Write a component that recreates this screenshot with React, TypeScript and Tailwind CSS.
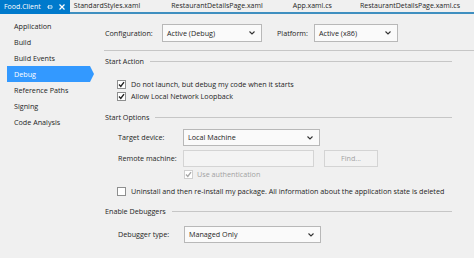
import React from 'react';

const font = { fontFamily: '"Segoe UI", "Open Sans", "Noto Sans", sans-serif' };

const Chevron = () => (
    <svg width="6" height="4" viewBox="0 0 6 4" className="shrink-0">
        <path d="M0.5 0.5 L3 3 L5.5 0.5" fill="none" stroke="#333" strokeWidth="1.1" />
    </svg>
);

const Select = ({ value, className }: { value: string; className: string }) => (
    <div
        className={`flex items-center justify-between h-[17px] border border-[#b8b8b8] bg-[#fafafa] pl-[4px] pr-[6px] text-[#1e1e1e] ${className}`}
    >
        <span>{value}</span>
        <Chevron />
    </div>
);

const Check = ({ checked, disabled }: { checked?: boolean; disabled?: boolean }) => (
    <div
        className={`flex items-center justify-center w-[9px] h-[9px] border bg-white shrink-0 ${
            disabled ? 'border-[#cfcfcf]' : 'border-[#8e8f8f]'
        }`}
    >
        {checked && (
            <svg width="7" height="7" viewBox="0 0 7 7">
                <path
                    d="M1 3.6 L2.8 5.4 L6 1.2"
                    fill="none"
                    stroke={disabled ? '#a8a8a8' : '#222'}
                    strokeWidth="1.4"
                />
            </svg>
        )}
    </div>
);

const Section = ({ title, className }: { title: string; className?: string }) => (
    <div className={`flex items-center h-[12px] pl-[5px] pr-[22px] ${className ?? ''}`}>
        <span className="text-[#1e1e1e]">{title}</span>
        <div className="flex-1 h-px bg-[#c6c6c6] ml-[6px]" />
    </div>
);

const tabs = ['StandardStyles.xaml', 'RestaurantDetailsPage.xaml', 'App.xaml.cs', 'RestaurantDetailsPage.xaml.cs'];
const navItems = ['Application', 'Build', 'Build Events', 'Debug', 'Reference Paths', 'Signing', 'Code Analysis'];

export default function App() {
    return (
        <div className="w-[474px] h-[258px] bg-[#f0f0f0] text-[7.2px] overflow-hidden flex flex-col" style={font}>
            {/* tab strip */}
            <div className="flex h-[14px] shrink-0 border-b-2 border-[#3f8fc0] text-[7px]">
                <div className="flex items-center h-[14px] bg-[#007acc] text-white pl-[4px] pr-[5px] gap-[6px]">
                    <span>Food.Client</span>
                    <svg width="6" height="6" viewBox="0 0 6 6">
                        <path d="M0 3 H1.5 M1.5 1.2 V4.8 M1.5 1.8 H5 V4.2 H1.5" fill="none" stroke="#cfe6f7" strokeWidth="0.9" />
                    </svg>
                    <svg width="6" height="6" viewBox="0 0 6 6">
                        <path d="M0.5 0.5 L5.5 5.5 M5.5 0.5 L0.5 5.5" stroke="#fff" strokeWidth="1.2" />
                    </svg>
                </div>
                <div className="flex items-center text-[#1e1e1e] whitespace-nowrap">
                    <span className="ml-[4px]">{tabs[0]}</span>
                    <span className="ml-[31px]">{tabs[1]}</span>
                    <span className="ml-[30px]">{tabs[2]}</span>
                    <span className="ml-[28px]">{tabs[3]}</span>
                </div>
            </div>

            <div className="flex flex-1">
                {/* sidebar */}
                <div className="w-[100px] shrink-0 pt-[4px]">
                    {navItems.map((item) =>
                        item === 'Debug' ? (
                            <div
                                key={item}
                                className="h-[16px] ml-[7px] w-[87px] flex items-center pl-[7px] bg-[#3399ff] text-white [clip-path:polygon(0_0,83px_0,87px_50%,83px_100%,0_100%)]"
                            >
                                {item}
                            </div>
                        ) : (
                            <div key={item} className="h-[16px] flex items-center pl-[14px] text-[#1e1e1e]">
                                {item}
                            </div>
                        ),
                    )}
                </div>

                {/* main */}
                <div className="flex-1 flex flex-col text-[#1e1e1e]">
                    <div className="flex items-center h-[18px] mt-[10px] pl-[5px]">
                        <span className="w-[57px]">Configuration:</span>
                        <Select value="Active (Debug)" className="w-[100px] h-[18px]" />
                        <span className="ml-[15px] w-[37px]">Platform:</span>
                        <Select value="Active (x86)" className="w-[84px] h-[18px]" />
                    </div>
                    <div className="h-px bg-[#c6c6c6] mt-[8px] ml-[4px]" />

                    <Section title="Start Action" className="mt-[4px]" />
                    <div className="flex items-center h-[12px] mt-[11px] pl-[17px] gap-[5px]">
                        <Check checked />
                        <span>Do not launch, but debug my code when it starts</span>
                    </div>
                    <div className="flex items-center h-[12px] pl-[17px] gap-[5px]">
                        <Check checked />
                        <span>Allow Local Network Loopback</span>
                    </div>

                    <Section title="Start Options" className="mt-[9px]" />
                    <div className="flex items-center h-[17px] mt-[6px] pl-[18px]">
                        <span className="w-[65px]">Target device:</span>
                        <Select value="Local Machine" className="w-[137px]" />
                    </div>
                    <div className="flex items-center h-[17px] mt-[4px] pl-[18px]">
                        <span className="w-[65px]">Remote machine:</span>
                        <div className="w-[131px] h-[17px] border border-[#d4d4d4] bg-[#f4f4f4]" />
                        <div className="ml-[10px] w-[54px] h-[17px] border border-[#d4d4d4] bg-[#f2f2f2] flex items-center justify-center text-[#a2a2a2]">
                            Find...
                        </div>
                    </div>
                    <div className="flex items-center h-[12px] mt-[1px] pl-[84px] gap-[4px] text-[#a2a2a2]">
                        <Check checked disabled />
                        <span>Use authentication</span>
                    </div>
                    <div className="flex items-center h-[12px] mt-[5px] pl-[17px] gap-[5px]">
                        <Check />
                        <span>
                            Uninstall and then re-install my package. All information about the application state is
                            deleted
                        </span>
                    </div>

                    <Section title="Enable Debuggers" className="mt-[8px]" />
                    <div className="flex items-center h-[17px] mt-[9px] pl-[18px]">
                        <span className="w-[66px]">Debugger type:</span>
                        <Select value="Managed Only" className="w-[137px]" />
                    </div>
                </div>
            </div>
        </div>
    );
}
